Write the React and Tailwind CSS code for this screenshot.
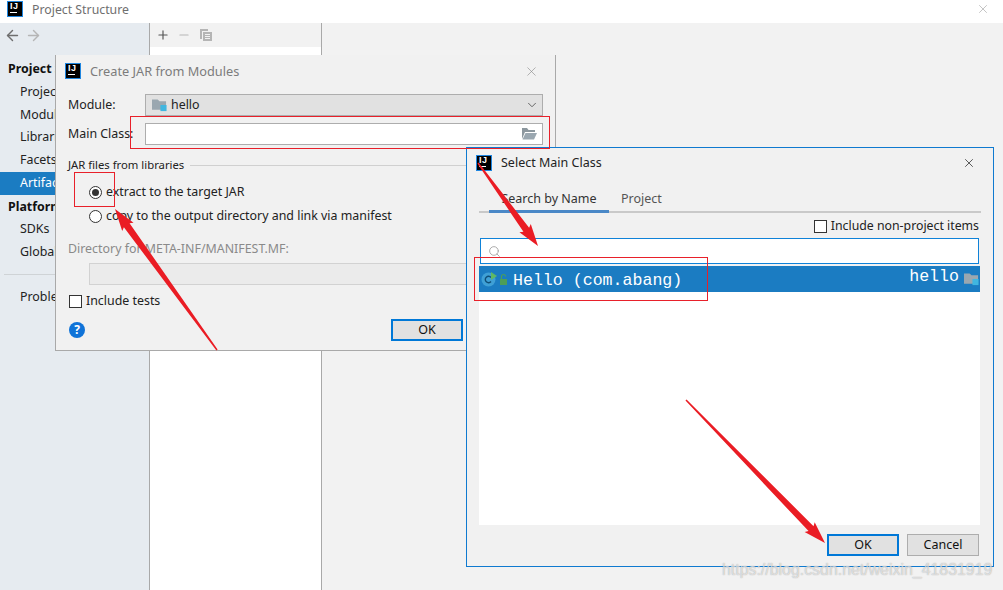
import { ArrowLeft, ArrowRight, ChevronDown, Plus, Minus, Search, X } from 'lucide-react';

const sans = 'font-["Noto_Sans","Open_Sans",sans-serif]';

const sidebarItems = [
  { label: 'Project Settings', head: true },
  { label: 'Project' },
  { label: 'Modules' },
  { label: 'Libraries' },
  { label: 'Facets' },
  { label: 'Artifacts', active: true },
  { label: 'Platform Settings', head: true },
  { label: 'SDKs' },
  { label: 'Global Libraries' },
];

function IdeaIcon() {
  return (
    <div className="w-4 h-4 bg-black border border-[#1f86e0] flex flex-col pl-[2px] text-white shrink-0">
      <span className="font-['Liberation_Sans',sans-serif] text-[9px] leading-[9px] font-bold tracking-[0.5px]">IJ</span>
      <span className="w-[7px] h-px bg-white mt-[1px]" />
    </div>
  );
}

function ModuleFolder({ className }) {
  return (
    <svg viewBox="0 0 16 14" className={className}>
      <path d="M0 1h6l2 2h7v9H0z" fill="#9aa7b0" />
      <rect x="9" y="7" width="6.5" height="6.5" fill="#40b6e0" />
    </svg>
  );
}

function Radio({ checked }) {
  return (
    <span className="w-[13px] h-[13px] rounded-full border border-[#333] bg-white flex items-center justify-center">
      {checked && <span className="w-[7px] h-[7px] rounded-full bg-[#333]" />}
    </span>
  );
}

function CheckBox() {
  return <span className="w-[13px] h-[13px] border border-[#333] bg-white shrink-0" />;
}

function DialogButton({ label, primary }) {
  return (
    <div
      className={`h-[22px] w-[72px] flex items-center justify-center bg-[#e1e1e1] text-[12.5px] text-[#111] ${
        primary ? 'border-2 border-[#0078d7]' : 'border border-[#adadad]'
      }`}
    >
      {label}
    </div>
  );
}

function CreateJarDialog() {
  return (
    <div className={`absolute left-[55px] top-[55px] w-[501px] h-[296px] bg-[#f1f1f1] border-l border-r border-b border-[#a9a9a9] ${sans} text-[12.4px] text-[#222]`}>
      <div className="h-[32px] pl-[9px] pr-[16px] flex items-center">
        <IdeaIcon />
        <span className="ml-[9px] text-[#7c7c7c] text-[12.75px] mt-[1px]">Create JAR from Modules</span>
        <X className="ml-auto w-[15px] h-[15px] text-[#888]" strokeWidth={1} />
      </div>
      <div className="px-[12px]">
        <div className="mt-[7px] flex items-center h-[21px]">
          <span className="w-[77px] mt-[2px]">Module:</span>
          <div className="flex-1 h-[22px] bg-[#e1e1e1] border border-[#adadad] flex items-center pl-[6px] pr-[3px]">
            <ModuleFolder className="w-[15px] h-[14px]" />
            <span className="ml-[4px] mt-[2px]">hello</span>
            <ChevronDown className="ml-auto w-[14px] h-[14px] text-[#555]" strokeWidth={1.5} />
          </div>
        </div>
        <div className="mt-[8px] flex items-center h-[21px]">
          <span className="w-[77px] mt-[1px]">Main Class:</span>
          <div className="flex-1 h-[22px] bg-white border border-[#adadad] flex items-center justify-end pr-[5px]">
            <svg viewBox="0 0 16 13" className="w-[16px] h-[13px]">
              <path d="M1 1h5l1.5 2H14v2H4L1 12z" fill="#8c979e" />
              <path d="M4.5 6H16l-3 6.5H1.5z" fill="#9aa7b0" />
            </svg>
          </div>
        </div>
        <div className="mt-[12px] flex items-center h-[18px] text-[11.3px]">
          <span>JAR files from libraries</span>
          <span className="flex-1 h-px bg-[#d0d0d0] ml-[6px]" />
        </div>
        <div className="mt-[9px] pl-[21px] flex items-center gap-[4px] h-[18px]">
          <Radio checked />
          <span>extract to the target JAR</span>
        </div>
        <div className="mt-[6px] pl-[21px] flex items-center gap-[4px] h-[18px]">
          <Radio />
          <span>copy to the output directory and link via manifest</span>
        </div>
        <div className="mt-[15px] h-[18px] text-[#8a8a8a] leading-[18px]">Directory for META-INF/MANIFEST.MF:</div>
        <div className="mt-[5px] ml-[21px] h-[22px] bg-[#ebebeb] border border-[#d2d2d2]" />
        <div className="mt-[7px] ml-[1px] flex items-center gap-[4px] h-[18px]">
          <CheckBox />
          <span>Include tests</span>
        </div>
        <div className="mt-[9px] flex items-center justify-between pr-[80px]">
          <span className="ml-[1px] w-[16px] h-[16px] rounded-full bg-[#0f73d8] text-white flex items-center justify-center text-[12px] font-bold">?</span>
          <DialogButton label="OK" primary />
        </div>
      </div>
    </div>
  );
}

function SelectClassDialog() {
  return (
    <div className={`absolute left-[466px] top-[147px] w-[528px] h-[420px] bg-[#f1f1f1] border border-[#0f7ad0] ${sans} text-[12.4px] text-[#222] flex flex-col`}>
      <div className="h-[30px] pl-[9px] pr-[17px] flex items-center">
        <IdeaIcon />
        <span className="ml-[9px] text-[#222] text-[12.5px]">Select Main Class</span>
        <X className="ml-auto w-[14px] h-[14px] text-[#222]" strokeWidth={1.25} />
      </div>
      <div className="mx-[12px] mt-[11px] h-[24px] border-b-2 border-[#c9c9c9] flex text-[12.5px] pl-[10px]">
        <div className="w-[120px] h-[24px] text-center leading-[20px] border-b-[3px] border-[#4a88c7] text-[#333]">Search by Name</div>
        <div className="ml-[12px] leading-[20px] text-[#555]">Project</div>
      </div>
      <div className="ml-[13px] mr-[14px] mt-[5px] flex items-center justify-end gap-[4px] h-[16px]">
        <CheckBox />
        <span className="text-[12.3px]">Include non-project items</span>
      </div>
      <div className="ml-[13px] mr-[14px] mt-[4px] h-[26px] bg-white border border-[#0f82d8] flex items-center pl-[7px]">
        <Search className="w-[13px] h-[13px] text-[#9a9a9a]" strokeWidth={1.5} />
      </div>
      <div className="ml-[12px] mr-[13px] mt-[2px] h-[259px] bg-white">
        <div className="h-[26px] bg-[#1b7cc2] flex items-center pl-[2px] pr-[1px] text-white font-['Liberation_Mono',monospace] text-[16.6px]">
          <svg viewBox="0 0 30 16" className="w-[30px] h-[16px] shrink-0">
            <circle cx="7.5" cy="8.5" r="7" fill="#3fa0d6" />
            <path d="M10 6.5a3.2 3.2 0 1 0 0 4" stroke="#0f4f78" strokeWidth="1.4" fill="none" />
            <path d="M10 1l6 4-6 4z" fill="#5fb865" />
            <rect x="19" y="8" width="7" height="6" fill="#4d9e58" />
            <path d="M20.5 8V5.5a2 2 0 0 1 4 0" stroke="#4d9e58" strokeWidth="1.2" fill="none" />
          </svg>
          <span className="ml-[2px] mt-[4px]">Hello (com.abang)</span>
          <span className="ml-auto mb-[3px]">hello</span>
          <ModuleFolder className="ml-[5px] w-[15px] h-[14px]" />
        </div>
      </div>
      <div className="mt-[9px] flex justify-end gap-[8px] pr-[14px]">
        <DialogButton label="OK" primary />
        <DialogButton label="Cancel" />
      </div>
    </div>
  );
}

// tapered annotation arrow, thin at the tail and thick at the head
function Arrow({ x1, y1, x2, y2 }) {
  const len = Math.hypot(x2 - x1, y2 - y1);
  const ux = (x2 - x1) / len;
  const uy = (y2 - y1) / len;
  const px = -uy;
  const py = ux;
  const at = (along, side) => `${x1 + ux * along + px * side},${y1 + uy * along + py * side}`;
  const neck = len - 20;
  const points = [
    at(0, -0.75), at(neck, -3.5), at(neck - 2, -7), at(len, 0),
    at(neck - 2, 7), at(neck, 3.5), at(0, 0.75),
  ].join(' ');
  return <polygon points={points} fill="#ea1c24" />;
}

function RedBox({ className }) {
  return <div className={`absolute border border-[#e8202a] ${className}`} />;
}

export default function App() {
  return (
    <div className={`relative w-[1003px] h-[590px] overflow-hidden bg-[#f2f2f2] ${sans} text-[12.4px] text-[#222]`}>
      <div className="h-[23px] bg-white flex items-start pt-[1px] pl-[7px] pr-[13px]">
        <IdeaIcon />
        <span className="ml-[9px] text-[12.3px] leading-[17px] text-[#6f6f6f]">Project Structure</span>
        <X className="ml-auto mt-[1px] w-[14px] h-[14px] text-[#999]" strokeWidth={1} />
      </div>
      <div className="flex h-[567px]">
        <aside className="w-[150px] shrink-0 bg-[#e6ebf0] border-r border-[#a9a9a9] flex flex-col">
          <div className="h-[24px] flex items-center pl-[4px] gap-[4px]">
            <ArrowLeft className="w-[17px] h-[17px] text-[#6e6e6e]" strokeWidth={2} />
            <ArrowRight className="w-[17px] h-[17px] text-[#b5b5b5]" strokeWidth={2} />
          </div>
          <div className="mt-[10px]">
            {sidebarItems.map((item) =>
              item.head ? (
                <div key={item.label} className="h-[22.75px] mt-[1px] pl-[8px] flex items-center font-bold whitespace-nowrap text-[#111]">
                  {item.label}
                </div>
              ) : (
                <div
                  key={item.label}
                  className={`h-[22.75px] pl-[20px] flex items-center whitespace-nowrap ${item.active ? 'bg-[#1b7cc2] text-white' : ''}`}
                >
                  {item.label}
                </div>
              )
            )}
          </div>
          <div className="h-px bg-[#cfd3d6] mt-[10px] mx-[4px]" />
          <div className="h-[23px] mt-[11px] pl-[20px] flex items-center">Problems</div>
        </aside>
        <div className="w-[172px] shrink-0 border-r border-[#a9a9a9] flex flex-col">
          <div className="h-[24px] flex items-center pl-[6px] gap-[7px]">
            <Plus className="w-[14px] h-[14px] text-[#555]" strokeWidth={2} />
            <Minus className="w-[14px] h-[14px] text-[#b5b5b5]" strokeWidth={2} />
            <svg viewBox="0 0 14 14" className="w-[14px] h-[14px] ml-[1px]">
              <path d="M1 1h8v2H3v8H1z" fill="#b5b5b5" />
              <rect x="4" y="4" width="9" height="9" fill="#b5b5b5" />
              <path d="M6 6.5h5M6 8.5h5M6 10.5h5" stroke="#f2f2f2" />
            </svg>
          </div>
          <div className="flex-1 bg-white" />
        </div>
      </div>

      <CreateJarDialog />
      <SelectClassDialog />

      <RedBox className="left-[130px] top-[116px] w-[420px] h-[33px]" />
      <RedBox className="left-[74px] top-[172px] w-[41px] h-[35px]" />
      <RedBox className="left-[474px] top-[257px] w-[234px] h-[44px]" />

      <svg className="absolute inset-0 w-[1003px] h-[590px] pointer-events-none" viewBox="0 0 1003 590">
        <Arrow x1={217} y1={350} x2={115} y2={209} />
        <Arrow x1={478} y1={163} x2={538} y2={246} />
        <Arrow x1={686} y1={400} x2={825} y2={543} />
      </svg>

      <div className="absolute left-[722px] top-[560px] font-['Liberation_Sans',sans-serif] text-[15.9px] leading-[20px] text-white/60 [text-shadow:0_0_1px_rgba(120,120,120,0.7)] whitespace-nowrap">
        https://blog.csdn.net/weixin_41831919
      </div>
    </div>
  );
}
